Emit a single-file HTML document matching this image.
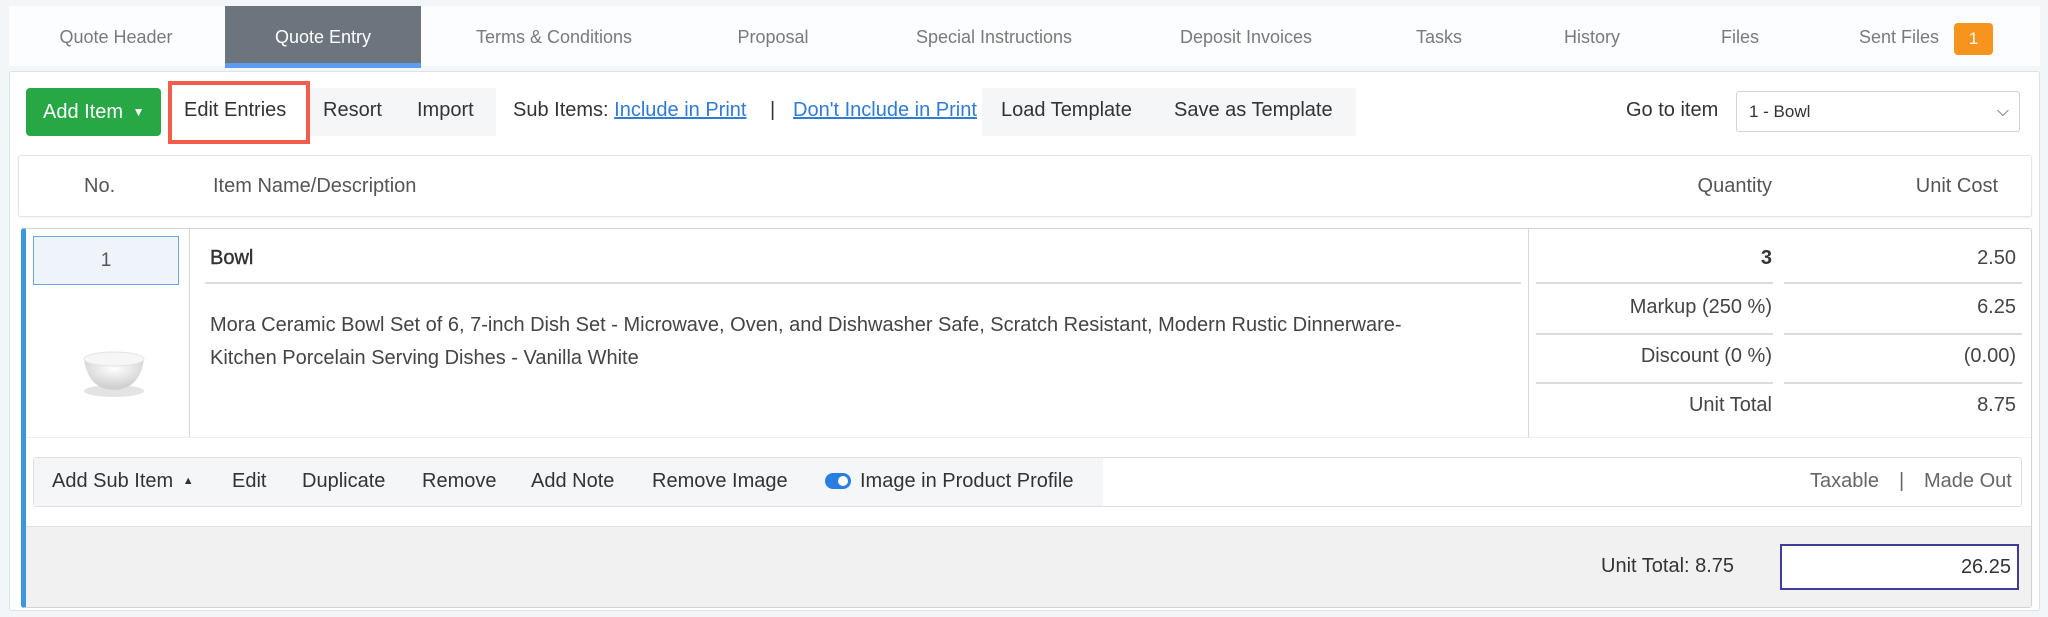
<!DOCTYPE html>
<html><head><meta charset="utf-8"><style>
*{box-sizing:border-box;margin:0;padding:0}
body{width:2048px;height:617px;background:#f3f6f9;font-family:"Liberation Sans",sans-serif;position:relative;overflow:hidden;color:#333}
.a{position:absolute;white-space:nowrap}
.tab{position:absolute;top:27px;font-size:18px;color:#7a7a7a;transform:translateX(-50%)}
.t{font-size:20px;color:#333}
.r{text-align:right}
.sep{position:absolute;height:2px;background:#dcdcdc}
a{color:#2f7bd9;text-decoration:underline}
</style></head><body>
<div class="a" style="left:9px;top:6px;width:2031px;height:60px;background:#fcfdfe"></div>
<div class="a" style="left:225px;top:6px;width:196px;height:62px;background:#6c757d"></div>
<div class="a" style="left:225px;top:63px;width:196px;height:5px;background:#5e9cf0"></div>
<div class="tab" style="left:116px">Quote Header</div>
<div class="tab" style="left:323px;color:#fff">Quote Entry</div>
<div class="tab" style="left:554px">Terms &amp; Conditions</div>
<div class="tab" style="left:773px">Proposal</div>
<div class="tab" style="left:994px">Special Instructions</div>
<div class="tab" style="left:1246px">Deposit Invoices</div>
<div class="tab" style="left:1439px">Tasks</div>
<div class="tab" style="left:1592px">History</div>
<div class="tab" style="left:1740px">Files</div>
<div class="tab" style="left:1899px">Sent Files</div>
<div class="a" style="left:1954px;top:23px;width:39px;height:32px;background:#f7941d;border-radius:4px;color:#fff;font-size:17px;text-align:center;line-height:32px">1</div>

<div class="a" style="left:9px;top:71px;width:2031px;height:540px;background:#fff;border:1px solid #dde2e8;border-radius:3px"></div>
<div class="a" style="left:26px;top:88px;width:135px;height:48px;background:#28a745;border-radius:4px;color:#fff;font-size:20px;line-height:48px;padding-left:17px">Add Item <span style="font-size:12px;position:relative;top:-2px;margin-left:4px">▼</span></div>
<div class="a" style="left:308px;top:88px;width:188px;height:48px;background:#f5f6f8"></div>
<div class="a" style="left:982px;top:88px;width:374px;height:48px;background:#f5f6f8"></div>
<div class="a" style="left:168px;top:81px;width:142px;height:63px;border:4px solid #f25c4a"></div>
<div class="a t" style="left:184px;top:99px">Edit Entries</div>
<div class="a t" style="left:323px;top:99px">Resort</div>
<div class="a t" style="left:417px;top:99px">Import</div>
<div class="a t" style="left:513px;top:99px">Sub Items: <a>Include in Print</a></div>
<div class="a t" style="left:770px;top:99px">|</div>
<div class="a t" style="left:793px;top:99px"><a>Don't Include in Print</a></div>
<div class="a t" style="left:1001px;top:99px">Load Template</div>
<div class="a t" style="left:1174px;top:99px">Save as Template</div>
<div class="a t" style="left:1626px;top:99px">Go to item</div>
<div class="a" style="left:1736px;top:91px;width:284px;height:41px;border:1px solid #cfd4da;border-radius:3px;background:#fff;font-size:17px;line-height:39px;padding-left:12px">1 - Bowl<span style="position:absolute;right:10px;top:0;font-size:16px;color:#555">⌵</span></div>

<div class="a" style="left:18px;top:155px;width:2014px;height:62px;border:1px solid #e0e3e7;border-radius:3px;box-shadow:0 1px 2px rgba(0,0,0,.06)"></div>
<div class="a t" style="left:84px;top:175px;color:#555">No.</div>
<div class="a t" style="left:213px;top:175px;color:#555">Item Name/Description</div>
<div class="a t r" style="left:1600px;width:172px;top:175px;color:#555">Quantity</div>
<div class="a t r" style="left:1850px;width:148px;top:175px;color:#555">Unit Cost</div>

<div class="a" style="left:21px;top:228px;width:2011px;height:380px;border:1px solid #d0d4d9;border-left:5px solid #3d97dc;border-radius:3px"></div>
<div class="a" style="left:33px;top:236px;width:146px;height:49px;background:#eef4fa;border:1px solid #6ea6d8;text-align:center;line-height:47px;font-size:19px;color:#555">1</div>
<div class="a" style="left:189px;top:229px;width:1px;height:208px;background:#d6d9dd"></div>
<div class="a" style="left:1528px;top:229px;width:1px;height:208px;background:#d6d9dd"></div>
<div class="a t" style="left:210px;top:247px;color:#333;-webkit-text-stroke:0.4px #333">Bowl</div>
<div class="sep" style="left:205px;top:282px;width:1316px"></div>
<div class="a" style="left:210px;top:309px;font-size:20px;color:#444;line-height:33px">Mora Ceramic Bowl Set of 6, 7-inch Dish Set - Microwave, Oven, and Dishwasher Safe, Scratch Resistant, Modern Rustic Dinnerware-<br>Kitchen Porcelain Serving Dishes - Vanilla White</div>
<svg class="a" style="left:64px;top:345px" width="100" height="55" viewBox="0 0 100 55">
<defs><radialGradient id="g" cx="50%" cy="30%" r="60%"><stop offset="0" stop-color="#fff"/><stop offset="1" stop-color="#d0d0d0"/></radialGradient></defs>
<ellipse cx="50" cy="46" rx="30" ry="6" fill="#c8c8c8" opacity=".5"/>
<path d="M20 14 Q24 44 50 45 Q76 44 80 14 Z" fill="url(#g)"/>
<ellipse cx="50" cy="14" rx="30" ry="7" fill="#f6f6f6" stroke="#e3e3e3"/>
</svg>
<div class="a t r" style="left:1600px;width:172px;top:247px;font-weight:bold">3</div>
<div class="a t r" style="left:1850px;width:166px;top:247px;color:#444">2.50</div>
<div class="sep" style="left:1536px;top:282px;width:237px"></div><div class="sep" style="left:1784px;top:282px;width:238px"></div>
<div class="a t r" style="left:1550px;width:222px;top:296px;color:#444">Markup (250 %)</div>
<div class="a t r" style="left:1850px;width:166px;top:296px;color:#444">6.25</div>
<div class="sep" style="left:1536px;top:333px;width:237px"></div><div class="sep" style="left:1784px;top:333px;width:238px"></div>
<div class="a t r" style="left:1550px;width:222px;top:345px;color:#444">Discount (0 %)</div>
<div class="a t r" style="left:1850px;width:166px;top:345px;color:#444">(0.00)</div>
<div class="sep" style="left:1536px;top:382px;width:237px"></div><div class="sep" style="left:1784px;top:382px;width:238px"></div>
<div class="a t r" style="left:1550px;width:222px;top:394px;color:#444">Unit Total</div>
<div class="a t r" style="left:1850px;width:166px;top:394px;color:#444">8.75</div>
<div class="a" style="left:26px;top:437px;width:2005px;height:1px;background:#eceef0"></div>

<div class="a" style="left:33px;top:457px;width:1989px;height:50px;border:1px solid #dcdfe3;border-radius:3px;background:#fff"></div>
<div class="a" style="left:34px;top:458px;width:1069px;height:48px;background:#f5f6f8"></div>
<div class="a t" style="left:52px;top:470px">Add Sub Item <span style="font-size:11px;position:relative;top:-3px;margin-left:4px">▲</span></div>
<div class="a t" style="left:232px;top:470px">Edit</div>
<div class="a t" style="left:302px;top:470px">Duplicate</div>
<div class="a t" style="left:422px;top:470px">Remove</div>
<div class="a t" style="left:531px;top:470px">Add Note</div>
<div class="a t" style="left:652px;top:470px">Remove Image</div>
<div class="a" style="left:825px;top:473px;width:26px;height:16px;border-radius:8px;background:#2a7de1"><div style="position:absolute;right:3px;top:3px;width:10px;height:10px;border-radius:50%;background:#fff"></div></div>
<div class="a t" style="left:860px;top:470px">Image in Product Profile</div>
<div class="a t" style="left:1810px;top:470px;color:#666">Taxable</div>
<div class="a t" style="left:1899px;top:470px;color:#666">|</div>
<div class="a t" style="left:1924px;top:470px;color:#666">Made Out</div>

<div class="a" style="left:26px;top:526px;width:2005px;height:81px;background:#f1f1f2;border-top:1px solid #dfe1e4"></div>
<div class="a t" style="left:1601px;top:555px">Unit Total: 8.75</div>
<div class="a" style="left:1780px;top:544px;width:239px;height:46px;border:2px solid #3f3d99;background:#fff;font-size:20px;text-align:right;line-height:42px;padding-right:6px">26.25</div>
</body></html>
